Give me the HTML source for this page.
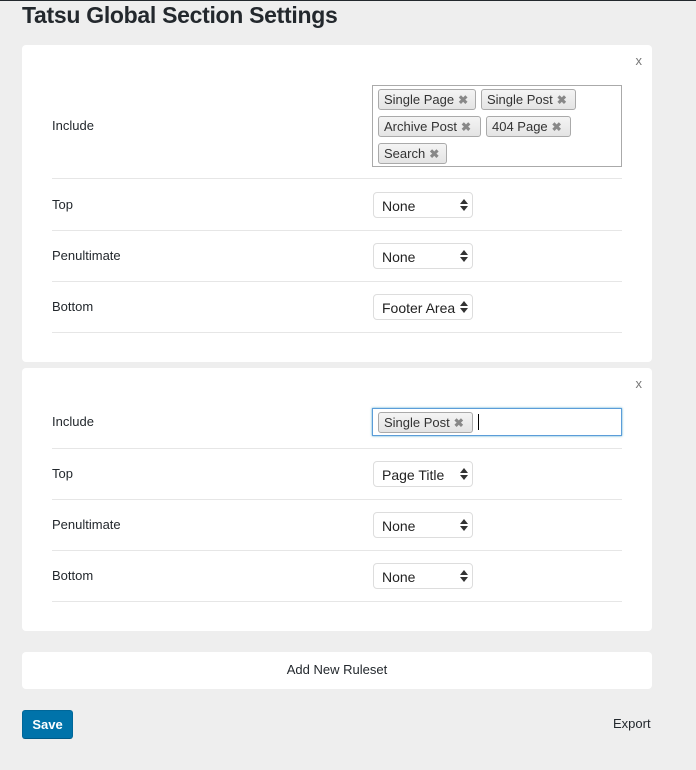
<!DOCTYPE html>
<html><head><style>
*{box-sizing:border-box;margin:0;padding:0}
body{width:696px;height:770px;background:#eeeeee;font-family:"Liberation Sans",sans-serif;position:relative;overflow:hidden;color:#23282d}
.a{position:absolute}
h1{position:absolute;left:22px;top:2px;font-size:23px;font-weight:bold;color:#23282d;letter-spacing:-0.3px}
.panel{position:absolute;left:22px;width:630px;background:#fff;border-radius:4px}
.x{position:absolute;right:10px;font-size:13px;color:#777}
.lbl{position:absolute;left:52px;font-size:13px;color:#23282d}
.sep{position:absolute;left:52px;width:570px;height:1px;background:#e6e6e6}
.sel{position:absolute;left:373px;width:100px;height:26px;border:1px solid #ddd;border-radius:4px;font-size:14px;padding:5px 0 0 8px;color:#222;background:#fff;white-space:nowrap;overflow:hidden}
.sel:after{content:"";position:absolute;right:4px;top:6px;border:4px solid transparent;border-bottom:5px solid #333;border-top:0}
.sel:before{content:"";position:absolute;right:4px;top:13px;border:4px solid transparent;border-top:5px solid #333;border-bottom:0}
.box{position:absolute;left:372px;width:250px;border:1px solid #aaa;background:#fff}
.tag{position:absolute;height:21px;border:1px solid #aaa;border-radius:3px;background:linear-gradient(#f4f4f4,#e4e4e4);font-size:13px;padding:2px 5px;color:#333;white-space:nowrap}
.tag b{color:#888;font-size:12px;margin-left:4px}
</style></head><body>
<div class="a" style="left:0;top:0;width:696px;height:1px;background:#23282d"></div>
<h1>Tatsu Global Section Settings</h1>

<div class="panel" style="top:45px;height:317px"><div class="x" style="top:8px">x</div></div>
<div class="lbl" style="top:118px">Include</div>
<div class="box" style="top:85px;height:82px"></div>
<div class="tag" style="left:378px;top:89px;width:98px">Single Page<b>✖</b></div>
<div class="tag" style="left:481px;top:89px;width:95px">Single Post<b>✖</b></div>
<div class="tag" style="left:378px;top:116px;width:103px">Archive Post<b>✖</b></div>
<div class="tag" style="left:486px;top:116px;width:85px">404 Page<b>✖</b></div>
<div class="tag" style="left:378px;top:143px;width:69px">Search<b>✖</b></div>
<div class="sep" style="top:178px"></div>
<div class="lbl" style="top:197px">Top</div>
<div class="sel" style="top:192px">None</div>
<div class="sep" style="top:230px"></div>
<div class="lbl" style="top:248px">Penultimate</div>
<div class="sel" style="top:243px">None</div>
<div class="sep" style="top:281px"></div>
<div class="lbl" style="top:299px">Bottom</div>
<div class="sel" style="top:294px">Footer Area</div>
<div class="sep" style="top:332px"></div>

<div class="panel" style="top:368px;height:263px"><div class="x" style="top:8px">x</div></div>
<div class="lbl" style="top:414px">Include</div>
<div class="box" style="top:408px;height:28px;border-color:#5b9dd9;box-shadow:0 0 2px rgba(30,140,190,.8)"></div>
<div class="tag" style="left:378px;top:412px;width:95px">Single Post<b>✖</b></div>
<div class="a" style="left:478px;top:414px;width:1px;height:16px;background:#000"></div>
<div class="sep" style="top:448px"></div>
<div class="lbl" style="top:466px">Top</div>
<div class="sel" style="top:461px">Page Title</div>
<div class="sep" style="top:499px"></div>
<div class="lbl" style="top:517px">Penultimate</div>
<div class="sel" style="top:512px">None</div>
<div class="sep" style="top:550px"></div>
<div class="lbl" style="top:568px">Bottom</div>
<div class="sel" style="top:563px">None</div>
<div class="sep" style="top:601px"></div>

<div class="panel" style="top:652px;height:37px;text-align:center;font-size:13px;padding-top:10px">Add New Ruleset</div>
<div class="a" style="left:22px;top:710px;width:51px;height:29px;background:#0073aa;border:1px solid #006799;border-bottom-color:#005a87;border-radius:3px;color:#fff;font-weight:bold;font-size:13px;text-align:center;padding-top:6px">Save</div>
<div class="a" style="left:613px;top:716px;font-size:13px">Export</div>
</body></html>
